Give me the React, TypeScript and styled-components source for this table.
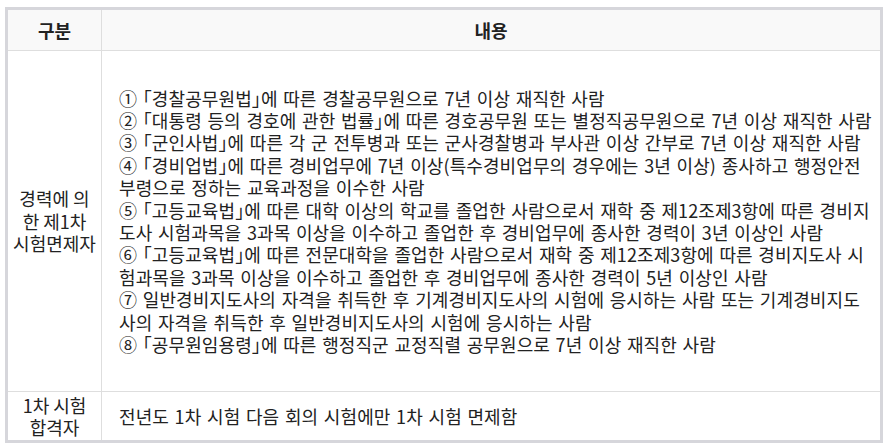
import React from 'react';
import styled, { createGlobalStyle } from 'styled-components';

const GlobalStyle = createGlobalStyle`
  html, body {
    margin: 0;
    padding: 0;
    background: #fff;
  }

  body {
    font-family: 'Noto Sans CJK KR', 'Noto Sans', sans-serif;
    color: #222;
  }
`;

const Page = styled.div`
  padding: 7px 6px 5px 5px;
`;

const Frame = styled.div`
  width: 878px;
  box-sizing: border-box;
  border: 3px solid #d6d6db;
`;

const Table = styled.table`
  width: 100%;
  border-collapse: separate;
  border-spacing: 0;
  table-layout: fixed;
  font-size: 18px;
  line-height: 22.4px;
  font-feature-settings: 'halt';
`;

const HeadCell = styled.th<{ $last?: boolean }>`
  height: 40px;
  padding: 0;
  background: #f9f9f9;
  font-weight: 700;
  text-align: center;
  border-bottom: 1px solid #dedede;
  border-right: ${p => (p.$last ? 'none' : '1px solid #dedede')};
`;

const LabelCell = styled.td<{ $last?: boolean }>`
  padding: 0 5px;
  text-align: center;
  vertical-align: middle;
  border-right: 1px solid #dedede;
  border-bottom: ${p => (p.$last ? 'none' : '1px solid #dedede')};
`;

const ContentCell = styled.td<{ $height: number; $last?: boolean }>`
  height: ${p => p.$height}px;
  padding: 0 4px 0 17px;
  vertical-align: middle;
  word-spacing: 1.5px;
  letter-spacing: 0.1px;
  border-bottom: ${p => (p.$last ? 'none' : '1px solid #dedede')};
`;

const Item = styled.p`
  margin: 0;
  white-space: nowrap;
`;

// each item is split where the reference wraps it
const exemptions: string[][] = [
  ['① 「경찰공무원법」에 따른 경찰공무원으로 7년 이상 재직한 사람'],
  ['② 「대통령 등의 경호에 관한 법률」에 따른 경호공무원 또는 별정직공무원으로 7년 이상 재직한 사람'],
  ['③ 「군인사법」에 따른 각 군 전투병과 또는 군사경찰병과 부사관 이상 간부로 7년 이상 재직한 사람'],
  [
    '④ 「경비업법」에 따른 경비업무에 7년 이상(특수경비업무의 경우에는 3년 이상) 종사하고 행정안전',
    '부령으로 정하는 교육과정을 이수한 사람',
  ],
  [
    '⑤ 「고등교육법」에 따른 대학 이상의 학교를 졸업한 사람으로서 재학 중 제12조제3항에 따른 경비지',
    '도사 시험과목을 3과목 이상을 이수하고 졸업한 후 경비업무에 종사한 경력이 3년 이상인 사람',
  ],
  [
    '⑥ 「고등교육법」에 따른 전문대학을 졸업한 사람으로서 재학 중 제12조제3항에 따른 경비지도사 시',
    '험과목을 3과목 이상을 이수하고 졸업한 후 경비업무에 종사한 경력이 5년 이상인 사람',
  ],
  [
    '⑦ 일반경비지도사의 자격을 취득한 후 기계경비지도사의 시험에 응시하는 사람 또는 기계경비지도',
    '사의 자격을 취득한 후 일반경비지도사의 시험에 응시하는 사람',
  ],
  ['⑧ 「공무원임용령」에 따른 행정직군 교정직렬 공무원으로 7년 이상 재직한 사람'],
];

export default function App() {
  return (
    <Page>
      <GlobalStyle />
      <Frame>
        <Table>
          <colgroup>
            <col style={{ width: 94 }} />
            <col />
          </colgroup>
          <thead>
            <tr>
              <HeadCell>구분</HeadCell>
              <HeadCell $last>내용</HeadCell>
            </tr>
          </thead>
          <tbody>
            <tr>
              <LabelCell>경력에 의한 제1차 시험면제자</LabelCell>
              <ContentCell $height={340}>
                {exemptions.map((lines, key) => (
                  <Item key={key}>
                    {lines.map((line, i) => (
                      <React.Fragment key={i}>
                        {i > 0 && <br />}
                        {line}
                      </React.Fragment>
                    ))}
                  </Item>
                ))}
              </ContentCell>
            </tr>
            <tr>
              <LabelCell $last>1차 시험 합격자</LabelCell>
              <ContentCell $height={48} $last>
                전년도 1차 시험 다음 회의 시험에만 1차 시험 면제함
              </ContentCell>
            </tr>
          </tbody>
        </Table>
      </Frame>
    </Page>
  );
}
